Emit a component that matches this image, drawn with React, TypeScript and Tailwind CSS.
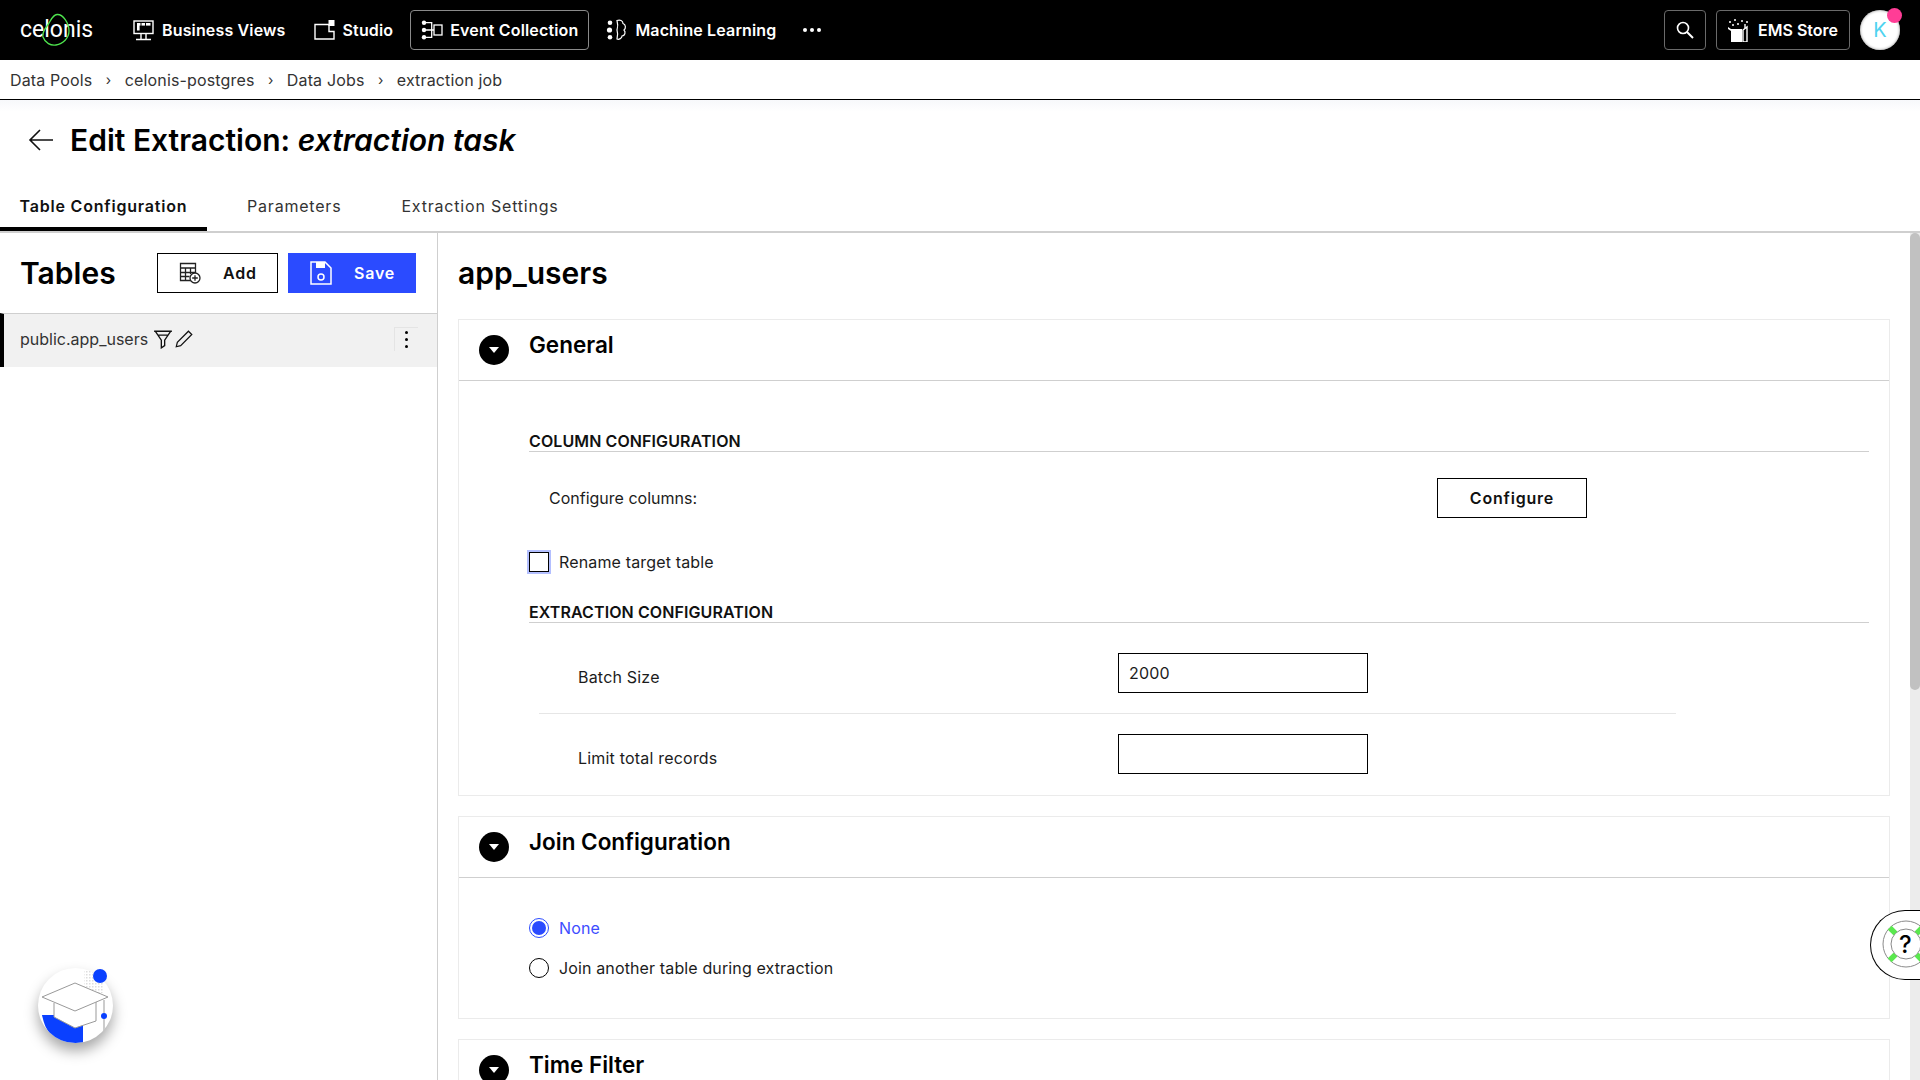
import React from "react";

const White = "#ffffff";

function BVIcon() {
  return (
    <svg width="22" height="24" viewBox="0 0 22 24" fill="none" stroke={White} strokeWidth="1.4">
      <rect x="1" y="3" width="19" height="12.5" />
      <path d="M8 15.5v6M13 15.5v6M3 21.5h15" />
      <rect x="4" y="5" width="3.5" height="2.6" fill={White} stroke="none" />
      <rect x="8.5" y="5" width="3.5" height="2.6" fill={White} stroke="none" />
      <rect x="13" y="5" width="4.5" height="2.6" fill={White} stroke="none" />
      <rect x="4" y="5" width="2.6" height="7.5" fill={White} stroke="none" />
    </svg>
  );
}
function StudioIcon() {
  return (
    <svg width="22" height="24" viewBox="0 0 22 24" fill="none" stroke={White} strokeWidth="1.4">
      <path d="M1 6.5h14v7h5v7.5H1z" />
      <rect x="14.5" y="2" width="6" height="6" fill={White} stroke="none" />
    </svg>
  );
}
function ECIcon() {
  return (
    <svg width="22" height="24" viewBox="0 0 22 24" fill="none" stroke={White} strokeWidth="1.3">
      <circle cx="3" cy="4.7" r="2.2" fill={White} stroke="none" />
      <circle cx="3" cy="12" r="2.2" fill={White} stroke="none" />
      <circle cx="3" cy="19.3" r="2.2" fill={White} stroke="none" />
      <path d="M3 4.7h7.7v14.6H3M3 12h10" />
      <rect x="13" y="7" width="8" height="10" />
    </svg>
  );
}
function MLIcon() {
  return (
    <svg width="22" height="24" viewBox="0 0 22 24" fill="none" stroke={White} strokeWidth="1.2">
      <circle cx="4" cy="4.7" r="2.3" fill={White} stroke="none" />
      <circle cx="3.5" cy="12" r="2.6" fill={White} stroke="none" />
      <circle cx="4" cy="19.3" r="2.3" fill={White} stroke="none" />
      <path d="M11 2.5c3-1 6 0 6 3 3 1 3 5 1 6.5 2 2 1 6-2 6 0 2-3 4-5 3 1-4 1-6 0-9 1-3 1-6 0-9.500z" />
    </svg>
  );
}
function StoreIcon() {
  return (
    <svg width="22" height="24" viewBox="0 0 22 24" fill="none">
      <path d="M1 9l3 2h11v13H4V13L1 11z" fill={White} />
      <path d="M16 12l4-3v15h-4z" stroke={White} strokeWidth="1.4" />
      <path d="M18 10V6" stroke={White} strokeWidth="1.4" />
      <circle cx="3" cy="4" r="1" fill={White} />
      <circle cx="8" cy="2" r="1" fill={White} />
      <circle cx="11" cy="6" r="1" fill={White} />
      <circle cx="15" cy="3" r="1" fill={White} />
      <circle cx="20" cy="4" r="1" fill={White} />
      <circle cx="6" cy="7" r="1" fill={White} />
    </svg>
  );
}
function Toggle() {
  return (
    <span className="flex h-[30px] w-[30px] shrink-0 items-center justify-center rounded-full bg-black">
      <svg width="12" height="8" viewBox="0 0 12 8">
        <path d="M1 1h10L6 7z" fill="#ffffff" />
      </svg>
    </span>
  );
}
function NavItem({ icon, label, active }: { icon: React.ReactNode; label: string; active?: boolean }) {
  return (
    <div
      className={`flex h-10 items-center gap-[7px] rounded-[4px] border px-[10px] text-white ${
        active ? "border-[#8a8a8a]" : "border-transparent"
      }`}
    >
      {icon}
      <span className="text-[16px] font-semibold tracking-[0.15px] whitespace-nowrap">{label}</span>
    </div>
  );
}
function Card({
  title,
  children,
  bodyClass,
}: {
  title: string;
  children?: React.ReactNode;
  bodyClass?: string;
}) {
  return (
    <section className="mb-[20px] border border-[#ebebeb] bg-white">
      <div className="flex h-[61px] gap-[20px] border-b border-[#cfcfcf] pt-[13px] pl-[20px]">
        <span className="pt-[2px]">
          <Toggle />
        </span>
        <h3 className="text-[22.5px] leading-[24px] font-semibold text-black">{title}</h3>
      </div>
      <div className={bodyClass}>{children}</div>
    </section>
  );
}
function SectionHead({ children }: { children: React.ReactNode }) {
  return (
    <div className="border-b border-[#cfcfcf] text-[16px] leading-[20px] font-semibold tracking-[0.1px] text-[#111] uppercase">
      {children}
    </div>
  );
}

export default function App() {
  return (
    <div className="relative flex h-screen flex-col overflow-hidden bg-white font-['Inter',sans-serif] text-[#1c1c1c]">
      {/* top navigation */}
      <header className="flex h-[60px] shrink-0 items-center justify-between bg-black pr-[20px] pl-[20px]">
        <div className="flex items-center">
          <div className="relative mr-[30px] w-[72px]">
            <span className="font-['Roboto',sans-serif] text-[23px] leading-[30px] text-white">celonis</span>
            <svg className="absolute top-[-2px] left-[21px]" width="30" height="34" viewBox="0 0 30 34" fill="none">
              <path
                d="M16 1.500C11 2 10 8 6 13c-3 4-5 7-4 11 2 6 8 9 13 8 7-1 13-7 13-14C28 10 22 1 16 1.500z"
                stroke="#4ee44e"
                strokeWidth="1.3"
              />
            </svg>
          </div>
          <div className="flex items-center gap-[6px]">
            <NavItem icon={<BVIcon />} label="Business Views" />
            <NavItem icon={<StudioIcon />} label="Studio" />
            <NavItem icon={<ECIcon />} label="Event Collection" active />
            <NavItem icon={<MLIcon />} label="Machine Learning" />
            <span className="ml-[10px] flex gap-[3px]">
              <i className="h-[4px] w-[4px] rounded-full bg-white" />
              <i className="h-[4px] w-[4px] rounded-full bg-white" />
              <i className="h-[4px] w-[4px] rounded-full bg-white" />
            </span>
          </div>
        </div>
        <div className="flex items-center gap-[10px]">
          <div className="flex h-10 w-[42px] items-center justify-center rounded-[4px] border border-[#6a6a6a]">
            <svg width="20" height="20" viewBox="0 0 20 20" fill="none" stroke="#fff" strokeWidth="1.6">
              <circle cx="8" cy="8" r="5.5" />
              <path d="M12 12l6 6" strokeWidth="2" />
            </svg>
          </div>
          <div className="flex h-10 w-[134px] items-center gap-[9px] rounded-[4px] border border-[#6a6a6a] pl-[10px]">
            <StoreIcon />
            <span className="text-[16px] font-semibold whitespace-nowrap text-white">EMS Store</span>
          </div>
          <div className="relative flex h-10 w-10 items-center justify-center rounded-full bg-white shadow-[inset_0_0_3px_#888]">
            <span className="text-[20px] text-[#4fd3f0]">K</span>
            <span className="absolute top-[-2px] right-[-2px] h-[15px] w-[15px] rounded-full bg-[#ff3d96]" />
          </div>
        </div>
      </header>

      {/* breadcrumbs */}
      <nav className="flex h-[40px] shrink-0 items-center gap-[13.4px] border-b border-black pl-[10px] text-[16px] tracking-[0.15px] text-[#333]">
        <span>Data Pools</span>
        <span className="text-[14px]">›</span>
        <span>celonis-postgres</span>
        <span className="text-[14px]">›</span>
        <span>Data Jobs</span>
        <span className="text-[14px]">›</span>
        <span>extraction job</span>
      </nav>

      {/* title */}
      <div className="flex h-[65px] shrink-0 items-center bg-gradient-to-b from-[#f7f8fb] to-white to-[12px] pt-[15px] pl-[28px]">
        <svg width="26" height="24" viewBox="0 0 26 24" fill="none" stroke="#111" strokeWidth="1.6" className="mr-[16px]">
          <path d="M25 12H2M12 2L2 12l10 10" />
        </svg>
        <h1 className="text-[30px] leading-[36px] font-semibold whitespace-nowrap text-black">
          Edit Extraction: <em className="italic">extraction task</em>
        </h1>
      </div>

      {/* tabs */}
      <div className="flex h-[68px] shrink-0 items-end border-b-2 border-[#cfcfcf] text-[16px] tracking-[0.8px]">
        <div className="flex h-[37px] w-[207px] items-start justify-center border-b-[4px] border-black font-semibold text-[#111]">
          Table Configuration
        </div>
        <div className="flex h-[37px] items-start pl-[40px] text-[#333]">Parameters</div>
        <div className="flex h-[37px] items-start pl-[60px] text-[#333]">Extraction Settings</div>
      </div>

      {/* main */}
      <main className="flex min-h-0 flex-1">
        {/* left */}
        <aside className="w-[438px] shrink-0 border-r border-[#cfcfcf]">
          <div className="flex h-[80px] items-start pt-[20px] pl-[20px]">
            <h2 className="w-[137px] text-[30px] leading-[40px] font-semibold text-black">Tables</h2>
            <button className="flex h-10 w-[121px] items-center gap-[22px] border border-black pl-[21px] text-[16px] font-semibold tracking-[0.8px] text-[#111]">
              <svg width="22" height="22" viewBox="0 0 22 22" fill="none" stroke="#222" strokeWidth="1.3">
                <path d="M1.500 1.500h15v17h-15zM1.500 6h15M1.500 10.500h15M1.500 14.500h9M6.500 6v12.500M11.500 6v6" />
                <circle cx="16" cy="16" r="5" fill="#fff" />
                <path d="M16 13.200v5.600M13.200 16h5.600" />
              </svg>
              Add
            </button>
            <button className="ml-[10px] flex h-10 w-[128px] items-center gap-[22px] bg-[#2b4bff] pl-[22px] text-[16px] font-semibold tracking-[0.8px] text-white">
              <svg width="22" height="24" viewBox="0 0 22 24" fill="none" stroke="#fff" strokeWidth="1.5">
                <path d="M1 1h14l6 6v16H1z" />
                <rect x="6" y="1" width="9" height="6" fill="#fff" stroke="none" />
                <circle cx="11" cy="16" r="3" />
              </svg>
              Save
            </button>
          </div>
          <div className="flex h-[54px] items-center border-t border-[#cfcfcf] border-l-[4px] border-l-black bg-[#f1f1f1] pb-[3px] pl-[16px] text-[16px] text-[#333]">
            <span>public.app_users</span>
            <svg className="ml-[5px]" width="20" height="20" viewBox="0 0 18 18" fill="none" stroke="#111" strokeWidth="1.2">
              <path d="M1 2h16M2 2l5.500 8v7l3-2v-5L16 2M4 5.500h10" />
            </svg>
            <svg className="ml-[1px]" width="20" height="20" viewBox="0 0 18 18" fill="none" stroke="#111" strokeWidth="1.1">
              <path d="M2 16l1-4L13 2l3 3L6 15z" />
            </svg>
            <span className="mr-[19px] ml-auto flex h-[24px] w-[24px] flex-col items-center justify-center gap-[4px] border-t border-l border-[#e4e4e4]">
              <i className="h-[3px] w-[3px] rounded-full bg-black" />
              <i className="h-[3px] w-[3px] rounded-full bg-black" />
              <i className="h-[3px] w-[3px] rounded-full bg-black" />
            </span>
          </div>
        </aside>

        {/* right */}
        <div className="min-w-0 flex-1 pr-[20px] pl-[20px]">
          <h2 className="pt-[20px] text-[30px] leading-[40px] font-semibold text-black">app_users</h2>
          <div className="mt-[26px]">
            <Card title="General" bodyClass="h-[414px] pt-[50px] pr-[20px] pl-[70px]">
              <SectionHead>Column Configuration</SectionHead>
              <div className="flex h-[91px] items-center pl-[20px] text-[16px]">
                <span className="w-[888px]">Configure columns:</span>
                <button className="h-10 w-[150px] border border-black text-[16px] font-semibold tracking-[0.8px] text-[#111]">
                  Configure
                </button>
              </div>
              <label className="mt-[9px] flex h-[20px] items-center gap-[10px] text-[16px] tracking-[0.15px]">
                <span className="h-[20px] w-[20px] border-[1.5px] border-black shadow-[0_0_0_2px_#b3bfff]" />
                Rename target table
              </label>
              <div className="mt-[30px]">
                <SectionHead>Extraction Configuration</SectionHead>
              </div>
              <div className="mr-[193px] ml-[10px] text-[16px] tracking-[0.2px]">
                <div className="flex items-center border-b border-[#e6e6e6] pt-[30px] pb-[20px] pl-[39px]">
                  <span className="w-[540px] pt-[8px]">Batch Size</span>
                  <input
                    readOnly
                    value="2000"
                    className="h-10 w-[250px] border border-black px-[10px] outline-none"
                  />
                </div>
                <div className="flex items-center pt-[20px] pl-[39px]">
                  <span className="w-[540px] pt-[8px]">Limit total records</span>
                  <input readOnly className="h-10 w-[250px] border border-black px-[10px] outline-none" />
                </div>
              </div>
            </Card>
            <Card title="Join Configuration" bodyClass="h-[140px] pt-[40px] pl-[70px]">
              <div className="flex flex-col gap-[20px] text-[16px] tracking-[0.13px]">
                <label className="flex h-[20px] items-center gap-[10px] text-[#3d4dff]">
                  <span className="flex h-[20px] w-[20px] items-center justify-center rounded-full border border-[#2b4bff]">
                    <i className="h-[14px] w-[14px] rounded-full bg-[#2b4bff]" />
                  </span>
                  None
                </label>
                <label className="flex h-[20px] items-center gap-[10px]">
                  <span className="h-[20px] w-[20px] rounded-full border border-black" />
                  Join another table during extraction
                </label>
              </div>
            </Card>
            <Card title="Time Filter" />
          </div>
        </div>

        {/* scrollbar */}
        <div className="w-[10px] shrink-0 bg-[#ececec]">
          <div className="h-[457px] rounded-[5px] bg-[#c1c1c1]" />
        </div>
      </main>

      {/* floating help widget */}
      <div className="absolute top-[910px] right-0 flex h-[70px] w-[50px] items-center overflow-hidden rounded-l-[35px] border border-r-0 border-black bg-white pl-[11px]">
        <svg width="50" height="50" viewBox="0 0 50 50" fill="none" className="shrink-0">
          <circle cx="24" cy="24" r="23" stroke="#8a8a8a" strokeWidth="1" />
          <circle cx="24" cy="24" r="15" stroke="#8a8a8a" strokeWidth="1" />
          <path d="M7.700 7.700l5.700 5.700M7.700 40.300l5.700-5.700M40.300 7.700l-5.700 5.700M40.300 40.300l-5.700-5.700" stroke="#5ae84e" strokeWidth="5.500" />
        </svg>
        <span className="absolute top-[19px] left-[28px] text-[24px] leading-[30px] font-medium text-black">?</span>
      </div>

      {/* floating academy button */}
      <div className="absolute top-[968px] left-[38px] h-[75px] w-[75px]">
        <div className="relative h-full w-full overflow-hidden rounded-full bg-white shadow-[0_8px_14px_rgba(0,0,0,0.35)]">
          <svg width="75" height="75" viewBox="0 0 75 75" fill="none" className="absolute inset-0">
            <defs>
              <pattern id="dots" width="3" height="3" patternUnits="userSpaceOnUse">
                <rect width="1.500" height="1.500" fill="#dddddd" />
              </pattern>
            </defs>
            <rect x="46" y="3" width="20" height="22" fill="url(#dots)" />
            <path d="M4 47h41v28H25C14 72 7 62 4 47z" fill="#0a40ff" />
            <path d="M16 35v14l21 11 21-7V32" fill="#fff" stroke="#999" strokeWidth="1" />
            <path d="M4 29l33-14 33 14-33 14z" fill="#fff" stroke="#999" strokeWidth="1" />
            <path d="M66 32v32" stroke="#999" strokeWidth="1" />
            <circle cx="66" cy="48" r="3" fill="#0a40ff" />
          </svg>
        </div>
        <span className="absolute top-[1px] left-[55px] h-[14px] w-[14px] rounded-full bg-[#0a40ff]" />
      </div>
    </div>
  );
}
